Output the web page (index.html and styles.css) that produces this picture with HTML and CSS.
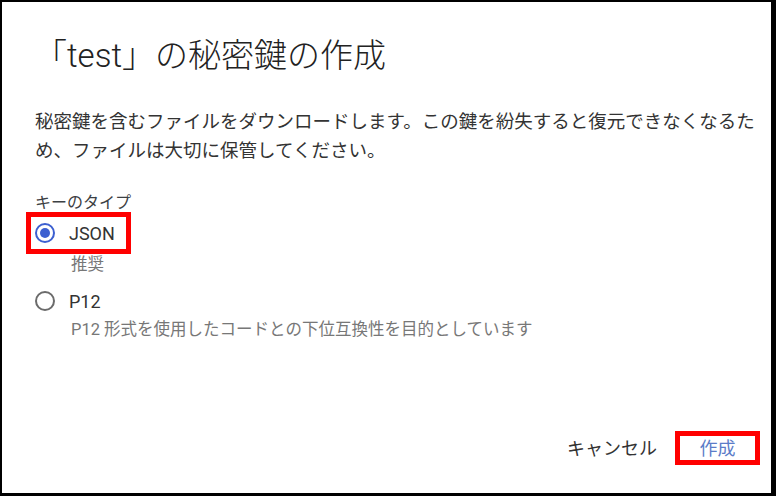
FILE: index.html
```html
<!DOCTYPE html>
<html lang="ja">
<head>
<meta charset="utf-8">
<title>秘密鍵の作成</title>
<link rel="stylesheet" href="styles.css">
</head>
<body>
<div class="dialog">
  <h1 class="title">「test」の秘密鍵の作成</h1>
  <p class="intro">秘密鍵を含むファイルをダウンロードします。この鍵を紛失すると復元できなくなるため、ファイルは大切に保管してください。</p>
  <div class="label">キーのタイプ</div>
  <div class="option option-first">
    <span class="radio radio-checked"></span>
    <span class="option-text">JSON</span>
    <span class="highlight highlight-json"></span>
  </div>
  <div class="hint hint-first">推奨</div>
  <div class="option option-second">
    <span class="radio"></span>
    <span class="option-text">P12</span>
  </div>
  <div class="hint">P12 形式を使用したコードとの下位互換性を目的としています</div>
  <div class="actions">
    <button class="btn btn-cancel">キャンセル</button>
    <button class="btn btn-create">作成<span class="highlight highlight-create"></span></button>
  </div>
</div>
</body>
</html>
```

FILE: styles.css
```css
html, body {
  margin: 0;
  padding: 0;
  background: #000;
}
body {
  width: 776px;
  height: 496px;
  overflow: hidden;
  font-family: Roboto, "Noto Sans CJK JP", sans-serif;
}
.dialog {
  box-sizing: border-box;
  margin: 2px 5px 3px 2px;
  width: 769px;
  height: 491px;
  background: #fff;
  padding: 34px 16px 28px 33px;
  display: flex;
  flex-direction: column;
}
.title {
  margin: 0 0 0 -1px;
  font-size: 33px;
  line-height: 40px;
  font-weight: 300;
  color: #222;
}
.intro {
  margin: 32px 0 0;
  font-size: 18.5px;
  line-height: 29px;
  color: #333;
}
.label {
  margin-top: 27px;
  font-size: 16px;
  line-height: 20px;
  color: #3c4043;
}
.option {
  position: relative;
  display: flex;
  align-items: center;
  gap: 14px;
  height: 30px;
}
.option-first { margin-top: 5px; }
.option-second { margin-top: 10px; }
.option-text {
  font-size: 18px;
  color: #333;
}
.radio {
  box-sizing: border-box;
  width: 20px;
  height: 20px;
  border-radius: 50%;
  border: 2px solid #6b6b6b;
  position: relative;
}
.radio-checked {
  border-color: #3c5fd0;
}
.radio-checked::after {
  content: "";
  position: absolute;
  left: 3px;
  top: 3px;
  width: 10px;
  height: 10px;
  border-radius: 50%;
  background: #3c5fd0;
}
.hint {
  margin-top: 3px;
  padding-left: 36px;
  font-size: 16.5px;
  line-height: 22px;
  color: #777;
}
.hint-first { margin-top: 6px; }
.actions {
  margin-top: auto;
  display: flex;
  justify-content: flex-end;
  gap: 4px;
}
.btn {
  position: relative;
  height: 36px;
  padding: 0 19px;
  border: none;
  background: transparent;
  font-family: Roboto, "Noto Sans CJK JP", sans-serif;
  font-size: 18px;
  cursor: pointer;
}
.btn-cancel { color: #333; }
.btn-create { color: #5b7cc8; width: 75px; padding: 0; }
.highlight {
  position: absolute;
  border: 5px solid #f00;
  box-sizing: border-box;
  pointer-events: none;
}
.highlight-json {
  left: -9px;
  top: -6px;
  width: 105px;
  height: 42px;
}
.highlight-create {
  left: -5px;
  top: 2px;
  width: 85px;
  height: 34px;
}
```
